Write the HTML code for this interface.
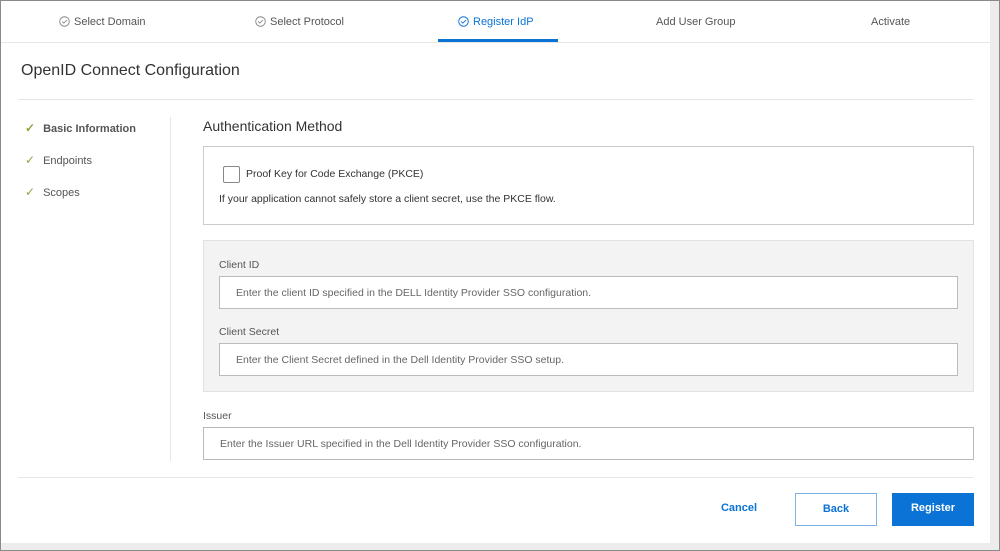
<!DOCTYPE html>
<html><head><style>
*{box-sizing:border-box;margin:0;padding:0}
body{width:1000px;height:551px;background:#ececec;font-family:"Liberation Sans",sans-serif;position:relative;overflow:hidden;color:#333}
.frame{position:absolute;left:0;top:0;width:1000px;height:551px;border:1px solid #8a8a8a}
.card{position:absolute;left:1px;top:1px;width:989px;height:542px;background:#fff}
.tabs{position:absolute;left:0;top:0;width:989px;height:42px;border-bottom:1px solid #e6e6e6}
.tab{position:absolute;top:15px;font-size:11px;color:#555;white-space:nowrap}
.tab svg{vertical-align:-2px;margin-right:4px}
.ab{color:#0b72d6}
.ul{position:absolute;left:437px;top:38px;width:120px;height:3px;background:#0b72d6}
.t{position:absolute;font-size:16px;color:#333}
.hr{position:absolute;height:1px;background:#e6e6e6}
.side{position:absolute;left:24px;font-size:11px;color:#555}
.side span{color:#8aa844;margin-right:8px;font-size:12px}
.box{position:absolute;border:1px solid #ccc}
.lbl{position:absolute;font-size:10.5px;color:#555}
.inp{position:absolute;border:1px solid #bbb;background:#fff;font-size:10.5px;color:#666;padding:10px 0 0 16px;height:33px}
.btn{position:absolute;top:492px;height:33px;width:82px;font-size:11px;font-weight:bold;text-align:center;line-height:31px}
</style></head><body>
<div class="card">
<div class="tabs">
<div class="tab" style="left:58px"><svg width="11" height="11" viewBox="0 0 12 12"><circle cx="6" cy="6" r="5.2" fill="none" stroke="#888"/><path d="M3.5 6l1.8 1.8L8.6 4.4" fill="none" stroke="#888"/></svg>Select Domain</div>
<div class="tab" style="left:254px"><svg width="11" height="11" viewBox="0 0 12 12"><circle cx="6" cy="6" r="5.2" fill="none" stroke="#888"/><path d="M3.5 6l1.8 1.8L8.6 4.4" fill="none" stroke="#888"/></svg>Select Protocol</div>
<div class="tab ab" style="left:457px"><svg width="11" height="11" viewBox="0 0 12 12"><circle cx="6" cy="6" r="5.2" fill="none" stroke="#0b72d6"/><path d="M3.5 6l1.8 1.8L8.6 4.4" fill="none" stroke="#0b72d6"/></svg>Register IdP</div>
<div class="tab" style="left:655px">Add User Group</div>
<div class="tab" style="left:870px">Activate</div>
<div class="ul"></div>
</div>
<div class="t" style="left:20px;top:61px">OpenID Connect Configuration</div>
<div class="hr" style="left:17px;top:98px;width:955px"></div>
<div class="side" style="top:120px;font-weight:bold"><span>✓</span>Basic Information</div>
<div class="side" style="top:152px"><span>✓</span>Endpoints</div>
<div class="side" style="top:184px"><span>✓</span>Scopes</div>
<div style="position:absolute;left:169px;top:116px;width:1px;height:344px;background:#e6e6e6"></div>
<div class="t" style="left:202px;top:117px;font-size:14px">Authentication Method</div>
<div class="box" style="left:202px;top:145px;width:771px;height:79px"></div>
<div style="position:absolute;left:222px;top:165px;width:17px;height:17px;border:1px solid #888;border-radius:2px"></div>
<div class="lbl" style="left:245px;top:167px;color:#333">Proof Key for Code Exchange (PKCE)</div>
<div class="lbl" style="left:218px;top:192px;color:#333">If your application cannot safely store a client secret, use the PKCE flow.</div>
<div class="box" style="left:202px;top:239px;width:771px;height:152px;background:#f3f3f3;border-color:#e2e2e2"></div>
<div class="lbl" style="left:218px;top:258px">Client ID</div>
<div class="inp" style="left:218px;top:275px;width:739px">Enter the client ID specified in the DELL Identity Provider SSO configuration.</div>
<div class="lbl" style="left:218px;top:325px">Client Secret</div>
<div class="inp" style="left:218px;top:342px;width:739px">Enter the Client Secret defined in the Dell Identity Provider SSO setup.</div>
<div class="lbl" style="left:202px;top:409px">Issuer</div>
<div class="inp" style="left:202px;top:426px;width:771px">Enter the Issuer URL specified in the Dell Identity Provider SSO configuration.</div>
<div class="hr" style="left:17px;top:476px;width:955px"></div>
<div class="btn" style="left:697px;color:#0b72d6">Cancel</div>
<div class="btn" style="left:794px;border:1px solid #7fb3e6;color:#0b72d6">Back</div>
<div class="btn" style="left:891px;background:#0b72d6;color:#fff">Register</div>
</div>
<div class="frame"></div>
</body></html>
